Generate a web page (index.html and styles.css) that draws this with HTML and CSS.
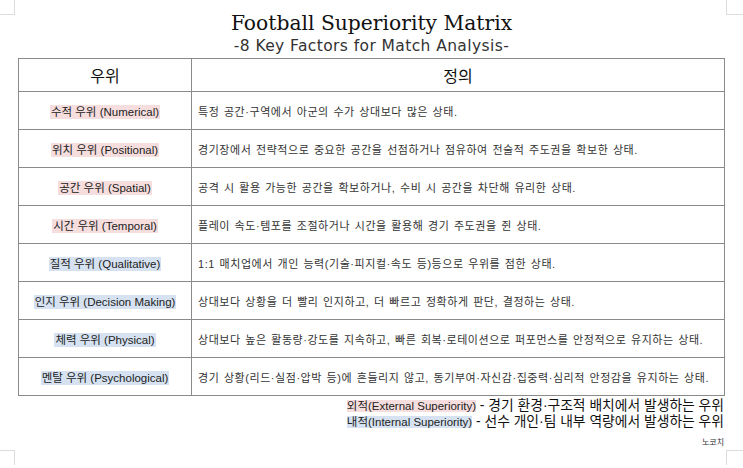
FILE: index.html
```html
<!DOCTYPE html>
<html lang="ko">
<head>
<meta charset="utf-8">
<title>Football Superiority Matrix</title>
<link rel="stylesheet" href="styles.css">
</head>
<body>
<div class="page">
  <span class="mark tl"></span><span class="mark tr"></span><span class="mark bl"></span><span class="mark br"></span>
  <header class="head">
    <h1 class="title">Football Superiority Matrix</h1>
    <p class="subtitle">-8 Key Factors for Match Analysis-</p>
  </header>
  <table class="matrix">
    <thead>
      <tr><th class="c1">우위</th><th class="c2">정의</th></tr>
    </thead>
    <tbody>
      <tr><td class="c1"><span class="hl ext">수적 우위 (Numerical)</span></td><td class="c2">특정 공간·구역에서 아군의 수가 상대보다 많은 상태.</td></tr>
      <tr><td class="c1"><span class="hl ext">위치 우위 (Positional)</span></td><td class="c2">경기장에서 전략적으로 중요한 공간을 선점하거나 점유하여 전술적 주도권을 확보한 상태.</td></tr>
      <tr><td class="c1"><span class="hl ext">공간 우위 (Spatial)</span></td><td class="c2">공격 시 활용 가능한 공간을 확보하거나, 수비 시 공간을 차단해 유리한 상태.</td></tr>
      <tr><td class="c1"><span class="hl ext">시간 우위 (Temporal)</span></td><td class="c2">플레이 속도·템포를 조절하거나 시간을 활용해 경기 주도권을 쥔 상태.</td></tr>
      <tr><td class="c1"><span class="hl int">질적 우위 (Qualitative)</span></td><td class="c2">1:1 매치업에서 개인 능력(기술·피지컬·속도 등)등으로 우위를 점한 상태.</td></tr>
      <tr><td class="c1"><span class="hl int">인지 우위 (Decision Making)</span></td><td class="c2">상대보다 상황을 더 빨리 인지하고, 더 빠르고 정확하게 판단, 결정하는 상태.</td></tr>
      <tr><td class="c1"><span class="hl int">체력 우위 (Physical)</span></td><td class="c2">상대보다 높은 활동량·강도를 지속하고, 빠른 회복·로테이션으로 퍼포먼스를 안정적으로 유지하는 상태.</td></tr>
      <tr><td class="c1"><span class="hl int">멘탈 우위 (Psychological)</span></td><td class="c2">경기 상황(리드·실점·압박 등)에 흔들리지 않고, 동기부여·자신감·집중력·심리적 안정감을 유지하는 상태.</td></tr>
    </tbody>
  </table>
  <div class="notes">
    <p class="note"><span class="hl ext small">외적(External Superiority)</span> - 경기 환경·구조적 배치에서 발생하는 우위</p>
    <p class="note"><span class="hl int small">내적(Internal Superiority)</span> - 선수 개인·팀 내부 역량에서 발생하는 우위</p>
    <p class="sign">노코치</p>
  </div>
</div>
</body>
</html>
```
FILE: styles.css
```css
* { box-sizing: border-box; }
html, body { margin: 0; padding: 0; background: #fff; }
body {
  font-family: "Liberation Sans", "Noto Sans CJK KR", sans-serif;
  color: #222;
}
.page {
  position: relative;
  width: 743px;
  height: 468px;
  padding: 11px 18px 0 18px;
}
.mark { position: absolute; width: 15px; height: 15px; border-color: #dcdcdc; border-style: solid; border-width: 0; }
.mark.tl { left: 0; top: 0; border-right-width: 1px; border-bottom-width: 1px; }
.mark.tr { right: 0; top: 0; border-left-width: 1px; border-bottom-width: 1px; width: 17px; }
.mark.bl { left: 0; top: 450px; border-right-width: 1px; border-top-width: 1px; }
.mark.br { right: 0; top: 450px; border-left-width: 1px; border-top-width: 1px; width: 17px; }
.head { text-align: center; }
.title {
  margin: 0;
  font-family: "DejaVu Serif", "Liberation Serif", serif;
  font-weight: normal;
  font-size: 20.3px;
  line-height: 24px;
  color: #111;
}
.subtitle {
  margin: 0;
  font-family: "DejaVu Sans", sans-serif;
  font-size: 15.5px;
  line-height: 23px;
  letter-spacing: 0.4px;
  color: #333;
}
.matrix {
  width: 707px;
  border-collapse: collapse;
  border: 1px solid #777;
  table-layout: fixed;
}
.matrix th, .matrix td {
  border: 1px solid #8a8a8a;
  padding: 0;
}
.matrix th {
  height: 33px;
  font-weight: normal;
  font-family: "Noto Sans CJK KR", sans-serif;
  font-size: 16px;
  color: #111;
}
.matrix td { height: 38px; font-size: 11.5px; color: #333; }
.matrix .c1 { width: 173px; text-align: center; }
.matrix td.c2 { padding-left: 6px; font-size: 11px; letter-spacing: 0.55px; word-spacing: 1px; }
.hl { padding: 1px 1px; color: #222; }
.hl.ext { background: #f6dede; }
.hl.int { background: #d6e2f1; }
.notes { text-align: right; padding-right: 1px; }
.note {
  margin: 0;
  font-family: "Liberation Sans", "Noto Sans CJK KR", sans-serif;
  font-size: 13.8px;
  line-height: 16px;
  color: #111;
}
.note:first-child { margin-top: 2px; }
.hl.small { font-size: 11.5px; padding: 0; line-height: 14px; }
.sign {
  margin: 7px 0 0 0;
  font-family: "Noto Sans CJK KR", sans-serif;
  font-size: 8px;
  line-height: 10px;
  color: #333;
}
```
